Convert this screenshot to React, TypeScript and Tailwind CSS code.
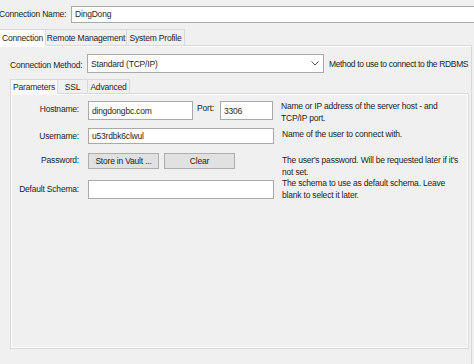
import React from "react";

const font = { fontFamily: '"Liberation Sans", Arial, sans-serif', letterSpacing: "-0.2px" };

function Input({ w, h, value }: { w: string; h: string; value?: string }) {
  return (
    <div className={`${w} ${h} bg-white border border-[#a9a9a9] flex items-center pl-[3px] text-[#1e1e1e] shrink-0`}>
      {value}
    </div>
  );
}

export default function App() {
  return (
    <div className="w-[474px] h-[364px] bg-[#f0f0f0] overflow-hidden text-[8.5px] text-[#1e1e1e] leading-[12px] whitespace-nowrap" style={font}>
      {/* Connection name */}
      <div className="flex items-center pt-[5px] h-[23px]">
        <span className="ml-[-1px] w-[72px] shrink-0">Connection Name:</span>
        <div className="flex-1 h-[17px] bg-white border-y border-l border-[#a9a9a9] flex items-center pl-[3px] mr-[-2px]">DingDong</div>
      </div>

      {/* Outer tabs */}
      <div className="flex h-[19px] mt-[3px] items-end">
        <div className="h-[17px] w-[48px] bg-[#fcfcfc] border-t border-r border-[#d9d9d9] flex items-center justify-center relative top-[1px] ml-[-2px] pl-[2px]">Connection</div>
        <div className="h-[16px] w-[81px] border-t border-r border-[#d9d9d9] flex items-center justify-center">Remote Management</div>
        <div className="h-[16px] w-[58px] border-t border-r border-[#d9d9d9] flex items-center justify-center">System Profile</div>
      </div>

      {/* Outer panel */}
      <div className="ml-[-2px] w-[474px] h-[320px] border border-[#d9d9d9] bg-[#f0f0f0] shadow-[inset_1px_1px_0_#ffffff]">
        {/* Connection method */}
        <div className="flex items-center mt-[8px] h-[19px]">
          <span className="ml-[11px] w-[77px] shrink-0 pt-[3px]">Connection Method:</span>
          <div className="w-[237px] h-[19px] bg-white border border-[#a9a9a9] flex items-center justify-between pl-[3px] pr-[3px] shrink-0">
            <span>Standard (TCP/IP)</span>
            <svg width="8" height="5" viewBox="0 0 8 5" className="mr-[1px]">
              <polyline points="0.5,0.5 4,4 7.5,0.5" fill="none" stroke="#555" strokeWidth="1" />
            </svg>
          </div>
          <span className="ml-[5px] tracking-[-0.35px]">Method to use to connect to the RDBMS</span>
        </div>

        {/* Inner tabs */}
        <div className="flex h-[15px] mt-[5px] ml-[11px] items-end">
          <div className="h-[15px] w-[48px] bg-[#fcfcfc] border-t border-l border-r border-[#d9d9d9] flex items-center justify-center relative top-[1px]">Parameters</div>
          <div className="h-[14px] w-[30px] border-t border-r border-[#d9d9d9] flex items-center justify-center">SSL</div>
          <div className="h-[14px] w-[42px] border-t border-r border-[#d9d9d9] flex items-center justify-center">Advanced</div>
        </div>

        {/* Inner panel */}
        <div className="ml-[11px] w-[459px] h-[256px] border border-[#d9d9d9] shadow-[inset_1px_1px_0_#ffffff,inset_-1px_-1px_0_#ffffff] pt-[7px]">
          {/* Hostname row */}
          <div className="flex h-[27px]">
            <span className="w-[68px] text-right shrink-0 pt-[2px]">Hostname:</span>
            <div className="ml-[9px]"><Input w="w-[105px]" h="h-[19px]" value="dingdongbc.com" /></div>
            <span className="ml-[4px] w-[23px] pt-[1px]">Port:</span>
            <Input w="w-[53px]" h="h-[19px]" value="3306" />
            <span className="ml-[8px] mt-[-1px]">Name or IP address of the server host - and<br />TCP/IP port.</span>
          </div>
          {/* Username row */}
          <div className="flex h-[25px]">
            <span className="w-[68px] text-right shrink-0 pt-[2px]">Username:</span>
            <div className="ml-[9px]"><Input w="w-[186px]" h="h-[16px]" value="u53rdbk6clwul" /></div>
            <span className="ml-[8px]">Name of the user to connect with.</span>
          </div>
          {/* Password row */}
          <div className="flex h-[27px]">
            <span className="w-[68px] text-right shrink-0 pt-[1px]">Password:</span>
            <div className="ml-[9px] flex gap-[5px] w-[186px]">
              <div className="w-[71px] h-[16px] bg-[#e1e1e1] border border-[#adadad] flex items-center justify-center">Store in Vault ...</div>
              <div className="w-[71px] h-[16px] bg-[#e1e1e1] border border-[#adadad] flex items-center justify-center">Clear</div>
            </div>
            <span className="ml-[8px] pt-[1px]">The user's password. Will be requested later if it's<br />not set.</span>
          </div>
          {/* Default schema */}
          <div className="flex h-[24px]">
            <span className="w-[68px] text-right shrink-0 pt-[3px]">Default Schema:</span>
            <div className="ml-[9px]"><Input w="w-[186px]" h="h-[19px]" /></div>
            <span className="ml-[8px] mt-[-3px]">The schema to use as default schema. Leave<br />blank to select it later.</span>
          </div>
        </div>
      </div>
    </div>
  );
}
